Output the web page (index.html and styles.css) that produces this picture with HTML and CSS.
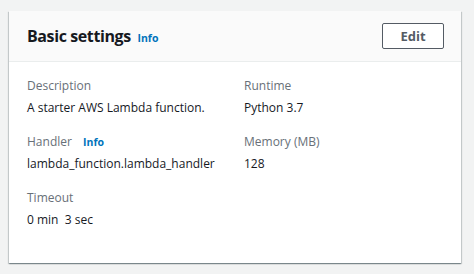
FILE: index.html
```html
<!DOCTYPE html>
<html lang="en">
<head>
    <meta charset="UTF-8">
    <meta name="viewport" content="width=device-width, initial-scale=1.0">
    <title>Basic settings</title>
    <link rel="stylesheet" href="styles.css">
</head>
<body>
    <div class="panel">
        <div class="panel-header">
            <h2>Basic settings <a class="info" href="#">Info</a></h2>
            <button type="button">Edit</button>
        </div>
        <div class="panel-body">
            <div class="col">
                <div class="field">
                    <div class="label">Description</div>
                    <div class="value">A starter AWS Lambda function.</div>
                </div>
                <div class="field">
                    <div class="label">Handler <a class="info" href="#">Info</a></div>
                    <div class="value">lambda_function.lambda_handler</div>
                </div>
                <div class="field">
                    <div class="label">Timeout</div>
                    <div class="value">0 min&nbsp;&nbsp;3 sec</div>
                </div>
            </div>
            <div class="col">
                <div class="field">
                    <div class="label">Runtime</div>
                    <div class="value">Python 3.7</div>
                </div>
                <div class="field">
                    <div class="label">Memory (MB)</div>
                    <div class="value">128</div>
                </div>
            </div>
        </div>
    </div>
</body>
</html>
```

FILE: styles.css
```css
body {
    margin: 0;
    padding: 11px 13px 11px 9px;
    background: #f2f3f3;
    font-family: "Open Sans", "Noto Sans", sans-serif;
    color: #16191f;
}
.panel {
    background: white;
    box-shadow: 0 1px 1px rgba(0,28,36,0.3), 1px 1px 1px rgba(0,28,36,0.15), -1px 1px 1px rgba(0,28,36,0.15);
    height: 252px;
    box-sizing: border-box;
}
.panel-header {
    display: flex;
    align-items: center;
    justify-content: space-between;
    height: 51px;
    box-sizing: border-box;
    padding: 0 17px 0 18px;
    background: #fafafa;
    border-bottom: 1px solid #eaeded;
}
h2 {
    margin: 0;
    font-size: 16px;
    font-weight: 700;
    letter-spacing: -0.4px;
}
h2 .info {
    margin-left: 3px;
    letter-spacing: 0;
}
.info {
    margin-left: 8px;
    font-size: 10.5px;
    font-weight: 700;
    color: #0073bb;
    text-decoration: none;
}
button {
    width: 62px;
    height: 26px;
    background: white;
    border: 1px solid #545b64;
    border-radius: 2px;
    font-family: inherit;
    font-size: 13px;
    font-weight: 700;
    color: #545b64;
    cursor: pointer;
}
.panel-body {
    display: grid;
    grid-template-columns: 217px 1fr;
    padding: 14px 18px;
}
.field {
    margin-bottom: 14px;
}
.label {
    font-size: 12px;
    line-height: 20px;
    color: #687078;
}
.value {
    font-size: 12px;
    line-height: 20px;
    margin-top: 2px;
}
```
